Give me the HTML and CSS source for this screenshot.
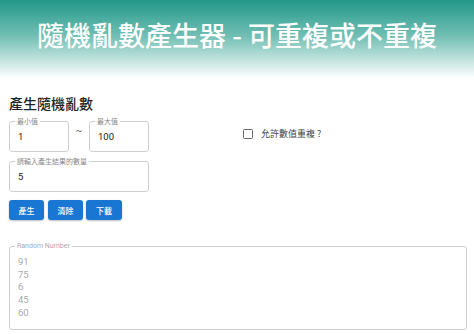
FILE: index.html
```html
<!DOCTYPE html>
<html lang="zh-Hant">
<head>
<meta charset="utf-8">
<title>隨機亂數產生器</title>
<link rel="stylesheet" href="styles.css">
</head>
<body>
<header class="hero">
  <h1 class="hero-title">隨機亂數產生器 - 可重複或不重複</h1>
</header>
<main class="page">
  <h2 class="section-title">產生隨機亂數</h2>
  <div class="form-layout">
    <div class="form-col">
      <div class="range-row">
        <fieldset class="field field-sm"><legend>最小值</legend><div class="field-value">1</div></fieldset>
        <span class="tilde">~</span>
        <fieldset class="field field-sm"><legend>最大值</legend><div class="field-value">100</div></fieldset>
      </div>
      <fieldset class="field"><legend>請輸入產生結果的數量</legend><div class="field-value">5</div></fieldset>
      <div class="btn-row">
        <button class="btn">產生</button>
        <button class="btn">清除</button>
        <button class="btn btn-wide">下載</button>
      </div>
    </div>
    <div class="option-col">
      <label class="check"><span class="check-box"></span><span class="check-text">允許數值重複 ?</span></label>
    </div>
  </div>
  <fieldset class="field field-output"><legend>Random Number</legend>
    <div class="output-lines">91<br>75<br>6<br>45<br>60</div>
  </fieldset>
</main>
</body>
</html>
```
FILE: styles.css
```css
* { box-sizing: border-box; }
body {
  margin: 0;
  background: #fff;
  font-family: Roboto, "Noto Sans CJK TC", "Noto Sans", sans-serif;
  color: #222;
}
.hero {
  height: 80px;
  background: linear-gradient(180deg, #22988a 0%, #72bfb4 45%, #ffffff 98%);
  display: flex;
  justify-content: center;
  padding-top: 19px;
}
.hero-title {
  margin: 0;
  font-family: "Noto Sans CJK TC", sans-serif;
  font-size: 27px;
  line-height: 32px;
  font-weight: 500;
  color: #fff;
  white-space: nowrap;
}
.page {
  padding: 0 7px 0 9px;
}
.section-title {
  margin: 15px 0 6px;
  font-family: "Noto Sans CJK TC", sans-serif;
  font-size: 14px;
  line-height: 16px;
  font-weight: 500;
  color: #222;
}
.form-layout {
  display: flex;
}
.form-col {
  width: 140px;
  display: flex;
  flex-direction: column;
}
.range-row {
  display: flex;
  align-items: flex-start;
  margin-bottom: 5px;
}
.tilde {
  width: 20px;
  text-align: center;
  font-size: 10px;
  color: #666;
  margin-top: 8px;
}
.field {
  margin: 0;
  padding: 0 8px 3px;
  border: 1px solid #cfcfcf;
  border-radius: 3px;
  min-width: 0;
}
.field-sm { width: 60px; }
.field legend {
  font-family: "Noto Sans CJK TC", Roboto, sans-serif;
  font-size: 7px;
  line-height: 8px;
  padding: 0 2px;
  margin-left: -3px;
  color: #888;
}
.field-value {
  height: 23px;
  line-height: 23px;
  font-size: 9.5px;
  color: #222;
}
.btn-row {
  display: flex;
  gap: 4px;
  margin-top: 8px;
}
.btn {
  width: 35px;
  height: 20px;
  padding: 0;
  border: 0;
  border-radius: 3px;
  background: #1976d2;
  color: #fff;
  font-family: "Noto Sans CJK TC", sans-serif;
  font-size: 8px;
  font-weight: 500;
  box-shadow: 0 1px 2px rgba(0,0,0,0.25);
}
.btn-wide { width: 36px; margin-left: -1px; }
.option-col {
  margin-left: 94px;
  padding-top: 10px;
}
.check {
  display: flex;
  align-items: center;
  gap: 8px;
}
.check-box {
  width: 10px;
  height: 10px;
  border: 1.5px solid #666;
  border-radius: 1.5px;
}
.check-text {
  font-family: "Noto Sans CJK TC", sans-serif;
  font-size: 9px;
  color: #444;
}
.field-output {
  margin-top: 22px;
  padding: 6px 8px 9px;
}
.field-output legend {
  font-family: Roboto, sans-serif;
  color: #aaa;
}
.output-lines {
  font-size: 9.5px;
  line-height: 12.7px;
  color: #aaa;
}
```
